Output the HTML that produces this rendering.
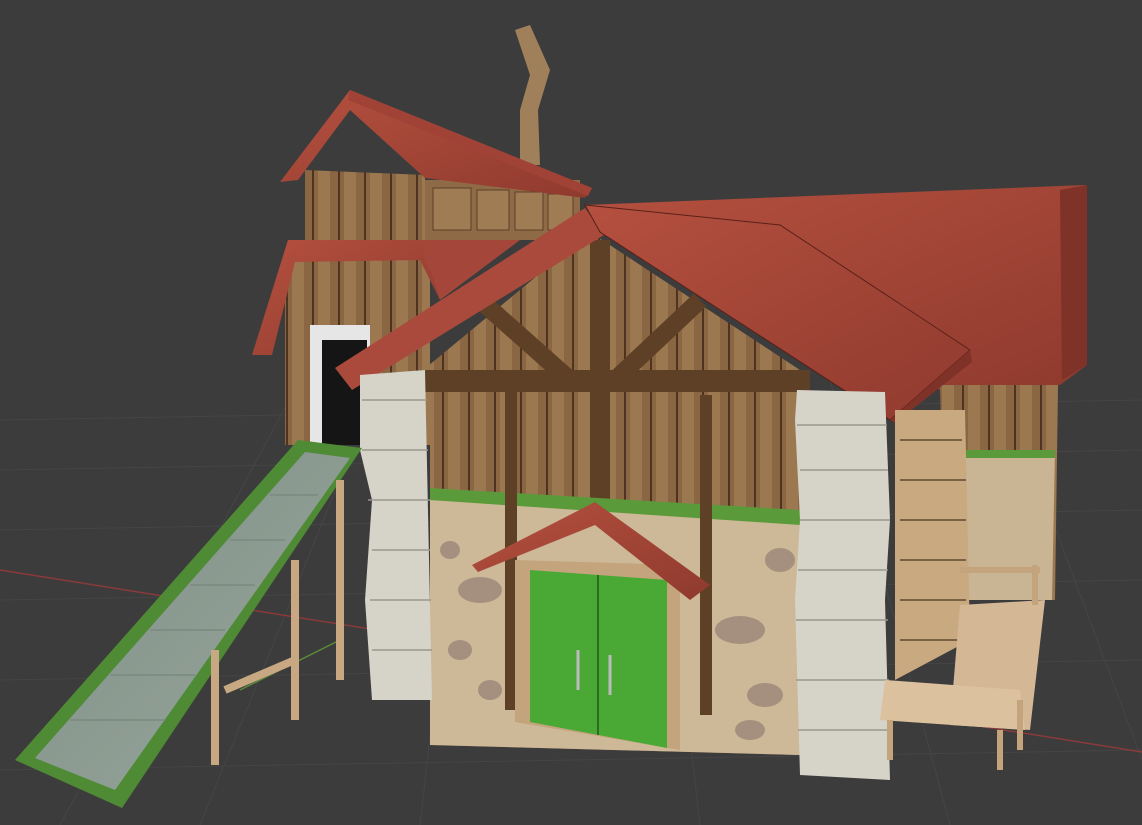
<!DOCTYPE html>
<html><head><meta charset="utf-8"><style>html,body{margin:0;padding:0;background:#3d3d3d;overflow:hidden}svg{display:block}</style></head>
<body>
<svg width="1142" height="825" viewBox="0 0 1142 825" xmlns="http://www.w3.org/2000/svg">
<defs>
<linearGradient id="roof" x1="0" y1="0" x2="1" y2="1"><stop offset="0" stop-color="#b5503f"/><stop offset="1" stop-color="#8f3a2e"/></linearGradient>
<linearGradient id="ramp" x1="0" y1="0" x2="1" y2="1"><stop offset="0" stop-color="#7e8e84"/><stop offset="1" stop-color="#9aa89e"/></linearGradient>
<pattern id="planks" width="26" height="10" patternUnits="userSpaceOnUse"><rect width="26" height="10" fill="#8a6642"/><rect width="2" height="10" fill="#4e3420"/><rect x="6" width="12" height="10" fill="#9c7850"/></pattern>
</defs>
<rect width="1142" height="825" fill="#3c3c3c"/>
<g stroke="#454545" stroke-width="1">
<path d="M0 420 L1142 400 M0 470 L1142 450 M0 530 L1142 510 M0 600 L1142 580 M0 680 L1142 660 M0 770 L1142 750"/>
<path d="M60 825 L300 380 M200 825 L380 380 M420 825 L470 380 M700 825 L650 380 M950 825 L830 380 M1142 760 L1000 380"/>
</g>
<path d="M0 570 L1142 752" stroke="#8a3a3a" stroke-width="1.5"/>
<path d="M240 690 L340 640" stroke="#5a8a3a" stroke-width="1.5"/>
<polygon points="585,205 1085,185 1087,365 1060,385 940,390 800,300" fill="url(#roof)"/>
<polygon points="1060,190 1087,185 1087,365 1062,380" fill="#7f3228"/>
<polygon points="940,385 1058,385 1055,600 945,600" fill="url(#planks)"/>
<polygon points="945,455 1055,450 1052,600 945,600" fill="#c9b594"/>
<rect x="945" y="450" width="110" height="8" fill="#5a9a3a"/>
<polygon points="305,170 425,175 425,245 305,245" fill="url(#planks)"/>
<rect x="425" y="180" width="155" height="60" fill="#8e6a46"/>
<g fill="#a07c54" stroke="#5d4028"><rect x="433" y="188" width="38" height="42"/><rect x="477" y="190" width="32" height="40"/><rect x="515" y="192" width="28" height="38"/><rect x="548" y="194" width="25" height="36"/></g>
<polygon points="515,30 530,25 550,70 538,110 540,165 520,165 520,110 530,75" fill="#a0805a"/>
<polygon points="280,182 350,90 592,188 585,198 425,178 350,110 298,180" fill="url(#roof)"/>
<polygon points="350,90 592,188 588,196 348,100" fill="#a04236"/>
<polygon points="285,260 430,250 430,445 285,445" fill="url(#planks)"/>
<polygon points="252,355 288,240 420,240 440,300 420,260 295,262 272,355" fill="url(#roof)"/>
<polygon points="420,240 520,240 440,300" fill="#a4473a"/>
<rect x="310" y="325" width="60" height="120" fill="#e6e6e6"/>
<rect x="322" y="340" width="45" height="105" fill="#151515"/>
<polygon points="405,385 590,232 800,370 800,755 430,745 430,385" fill="url(#planks)"/>
<path d="M480 300 L570 380 M700 300 L615 380" stroke="#5e4026" stroke-width="18"/>
<rect x="590" y="240" width="20" height="260" fill="#5e4026"/>
<rect x="420" y="370" width="390" height="22" fill="#5e4026"/>
<polygon points="430,500 800,510 800,755 430,745" fill="#cdb897"/>
<polygon points="430,488 800,510 800,525 430,500" fill="#5a9a3a"/>
<g fill="#a59080"><ellipse cx="480" cy="590" rx="22" ry="13"/><ellipse cx="450" cy="550" rx="10" ry="9"/><ellipse cx="460" cy="650" rx="12" ry="10"/><ellipse cx="740" cy="630" rx="25" ry="14"/><ellipse cx="765" cy="695" rx="18" ry="12"/><ellipse cx="780" cy="560" rx="15" ry="12"/><ellipse cx="750" cy="730" rx="15" ry="10"/><ellipse cx="490" cy="690" rx="12" ry="10"/></g>
<rect x="505" y="390" width="12" height="320" fill="#5e4026"/>
<rect x="700" y="395" width="12" height="320" fill="#5e4026"/>
<polygon points="515,560 680,565 680,750 515,722" fill="#c4a47c"/>
<polygon points="530,570 667,580 667,748 530,722" fill="#4aa835"/>
<path d="M598 575 L598 735" stroke="#2d6a22" stroke-width="2"/>
<path d="M578 650 v40 M610 655 v40" stroke="#bbb" stroke-width="3"/>
<polygon points="472,565 595,502 710,585 690,600 595,525 478,572" fill="url(#roof)"/>
<polygon points="335,368 585,208 604,235 352,390" fill="#a94a3c"/>
<polygon points="585,205 780,225 970,350 890,420 600,232" fill="url(#roof)" stroke="#5a2019" stroke-width="1"/>
<polygon points="890,420 970,350 972,362 895,423" fill="#7f3228"/>
<polygon points="360,375 425,370 432,700 372,700 365,600 372,500 360,450" fill="#d6d3c8"/>
<g stroke="#9a978e" stroke-width="1.5"><path d="M362 400 H427 M362 450 H428 M368 500 H430 M372 550 H430 M370 600 H431 M372 650 H432"/></g>
<polygon points="797,390 885,392 890,520 885,600 890,780 800,775 795,600 800,520 795,420" fill="#d6d3c8"/>
<g stroke="#9a978e" stroke-width="1.5"><path d="M797 425 H887 M800 470 H888 M800 520 H890 M798 570 H888 M796 620 H888 M796 680 H889 M798 730 H890"/></g>
<polygon points="895,410 965,410 970,640 895,680" fill="#c9a980"/>
<g stroke="#7a6045" stroke-width="2"><path d="M900 440 H962 M900 480 H966 M900 520 H966 M900 560 H966 M900 600 H966 M900 640 H966"/></g>
<polygon points="960,605 1045,600 1030,730 950,725" fill="#d4b896"/>
<polygon points="885,680 1020,690 1025,730 880,720" fill="#dcc19f"/>
<path d="M890 720 V760 M1000 730 V770 M1020 700 V750 M960 570 H1040 M1035 565 V605" stroke="#c4a47c" stroke-width="6"/>
<polygon points="15,760 298,440 362,448 122,808" fill="#4f8a35"/>
<polygon points="35,758 305,452 350,458 115,790" fill="url(#ramp)"/>
<g stroke="#7a8a80" stroke-width="1.5"><path d="M70 720 H165 M110 675 H195 M150 630 H225 M190 585 H255 M230 540 H285 M270 495 H318"/></g>
<path d="M215 650 V765 M295 560 V720 M340 480 V680 M225 690 L295 660" stroke="#c8a882" stroke-width="8"/>
</svg>
</body></html>
